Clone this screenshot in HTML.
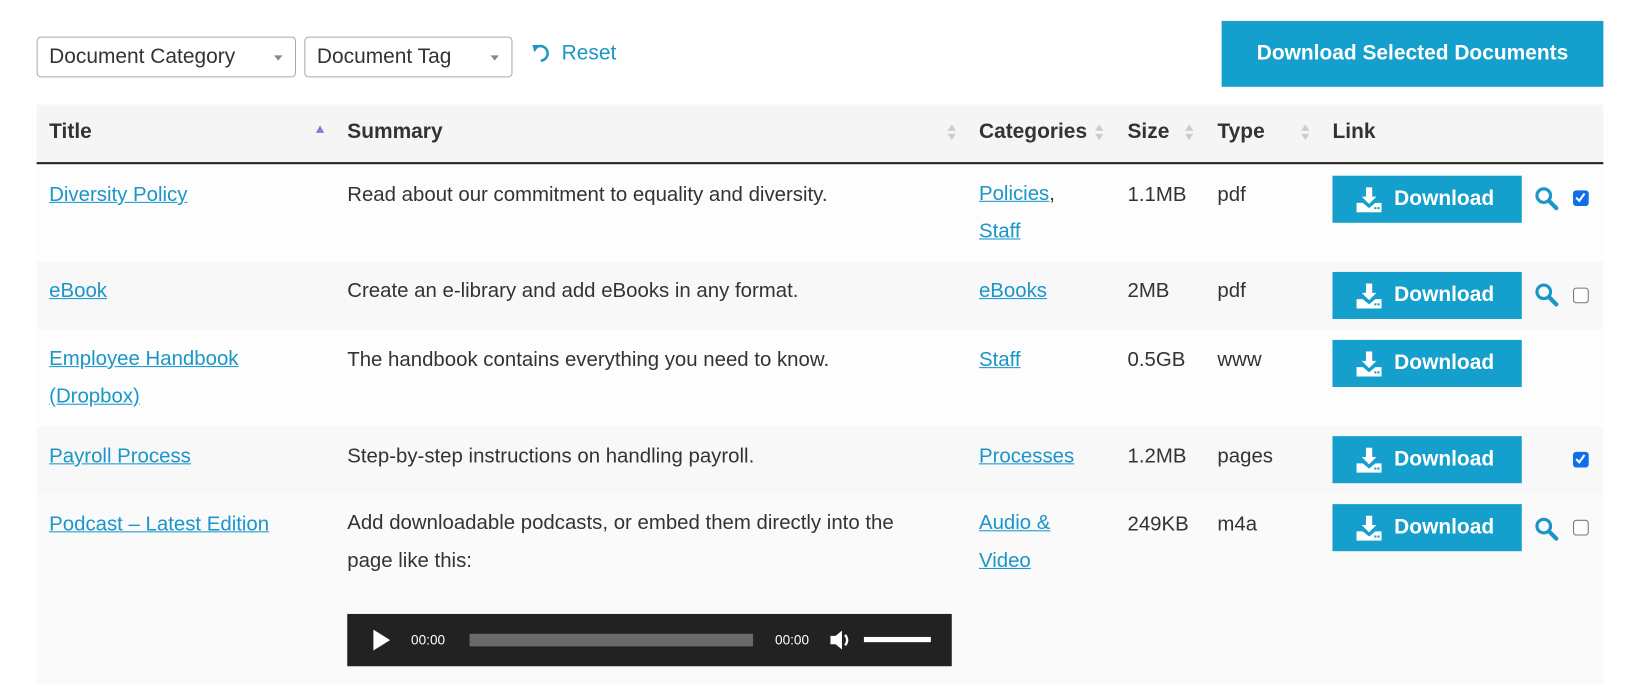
<!DOCTYPE html>
<html><head><meta charset="utf-8">
<style>
*{box-sizing:border-box;margin:0;padding:0}
html,body{width:1640px;height:684px;overflow:hidden;background:#fff}
#w{position:absolute;left:0;top:0;width:1568px;height:654px;transform:scale(1.0459);transform-origin:0 0;font-family:"Liberation Sans",sans-serif;color:#333;font-size:19.5px}
.a{position:absolute;white-space:nowrap}
.sel{position:absolute;top:35px;height:39px;border:1px solid #aaa;border-radius:4px;background:#fff;padding:0 0 0 11px;line-height:37px;font-size:20px;color:#333}
.sel:after{content:"";position:absolute;right:12px;top:17px;border-left:4.5px solid transparent;border-right:4.5px solid transparent;border-top:5px solid #888}
.lnk{color:#1a96c8;text-decoration:underline}
.hd{font-weight:bold;font-size:20px;color:#333}
.row{position:absolute;left:35px;width:1498px}
.btn{position:absolute;left:1274px;width:181px;height:45px;background:#159fcc;color:#fff;font-weight:bold;font-size:20px;line-height:45px}
.btn svg{position:absolute;left:23px;top:11px}
.btn span{position:absolute;left:59px}
.srt{position:absolute;width:0;height:0;border-left:4px solid transparent;border-right:4px solid transparent}
.cb{position:absolute;left:1504px;width:15px;height:15px;border:1.5px solid #777;border-radius:3px;background:#fff}
.cb.on{background:#0f6fe8;border-color:#0f6fe8}
</style></head><body><div id="w">
<div class="sel" style="left:35px;width:248px">Document Category</div>
<div class="sel" style="left:291px;width:199px">Document Tag</div>
<svg class="a" style="left:508px;top:41px" width="22" height="20" viewBox="0 0 22 20"><path d="M5 4 A7 7 0 1 1 9 17" fill="none" stroke="#1a96c8" stroke-width="2.4"/><path d="M1 2 L8 2 L3 9 Z" fill="#1a96c8"/></svg>
<div class="a" style="left:537px;top:40px;color:#1a96c8;font-size:20px">Reset</div>
<div class="a" style="left:1168px;top:20px;width:365px;height:63px;background:#159fcc;color:#fff;font-weight:bold;font-size:20px;line-height:63px;text-align:center">Download Selected Documents</div>

<div class="a" style="left:35px;top:100px;width:1498px;height:57px;background:#f5f5f5;border-bottom:2px solid #222"></div>
<div class="a hd" style="left:47px;top:115px">Title</div>
<div class="srt" style="left:302px;top:120px;border-bottom:7px solid #7b7fd8"></div>
<div class="a hd" style="left:332px;top:115px">Summary</div>
<div class="srt" style="left:906px;top:119px;border-bottom:6px solid #ccc"></div><div class="srt" style="left:906px;top:128px;border-top:6px solid #ccc"></div>
<div class="a hd" style="left:936px;top:115px">Categories</div>
<div class="srt" style="left:1047px;top:119px;border-bottom:6px solid #ccc"></div><div class="srt" style="left:1047px;top:128px;border-top:6px solid #ccc"></div>
<div class="a hd" style="left:1078px;top:115px">Size</div>
<div class="srt" style="left:1133px;top:119px;border-bottom:6px solid #ccc"></div><div class="srt" style="left:1133px;top:128px;border-top:6px solid #ccc"></div>
<div class="a hd" style="left:1164px;top:115px">Type</div>
<div class="srt" style="left:1244px;top:119px;border-bottom:6px solid #ccc"></div><div class="srt" style="left:1244px;top:128px;border-top:6px solid #ccc"></div>
<div class="a hd" style="left:1274px;top:115px">Link</div>

<div class="row" style="top:159px;height:91px;background:#fdfdfd"></div>
<div class="row" style="top:250px;height:65px;background:#f8f8f8"></div>
<div class="row" style="top:315px;height:93px;background:#fdfdfd"></div>
<div class="row" style="top:408px;height:64px;background:#f8f8f8"></div>
<div class="row" style="top:472px;height:182px;background:#fafafa"></div>

<!-- row1 -->
<div class="a lnk" style="left:47px;top:175px">Diversity Policy</div>
<div class="a" style="left:332px;top:175px">Read about our commitment to equality and diversity.</div>
<div class="a" style="left:936px;top:175px;line-height:36px;top:167px"><span class="lnk">Policies</span>,<br><span class="lnk">Staff</span></div>
<div class="a" style="left:1078px;top:175px">1.1MB</div>
<div class="a" style="left:1164px;top:175px">pdf</div>
<!-- row2 -->
<div class="a lnk" style="left:47px;top:267px">eBook</div>
<div class="a" style="left:332px;top:267px">Create an e-library and add eBooks in any format.</div>
<div class="a lnk" style="left:936px;top:267px">eBooks</div>
<div class="a" style="left:1078px;top:267px">2MB</div>
<div class="a" style="left:1164px;top:267px">pdf</div>
<!-- row3 -->
<div class="a" style="left:47px;top:325px;line-height:36px"><span class="lnk">Employee Handbook</span><br><span class="lnk">(Dropbox)</span></div>
<div class="a" style="left:332px;top:333px">The handbook contains everything you need to know.</div>
<div class="a lnk" style="left:936px;top:333px">Staff</div>
<div class="a" style="left:1078px;top:333px">0.5GB</div>
<div class="a" style="left:1164px;top:333px">www</div>
<!-- row4 -->
<div class="a lnk" style="left:47px;top:425px">Payroll Process</div>
<div class="a" style="left:332px;top:425px">Step-by-step instructions on handling payroll.</div>
<div class="a lnk" style="left:936px;top:425px">Processes</div>
<div class="a" style="left:1078px;top:425px">1.2MB</div>
<div class="a" style="left:1164px;top:425px">pages</div>
<!-- row5 -->
<div class="a lnk" style="left:47px;top:490px">Podcast – Latest Edition</div>
<div class="a" style="left:332px;top:482px;line-height:36px">Add downloadable podcasts, or embed them directly into the<br>page like this:</div>
<div class="a" style="left:936px;top:482px;line-height:36px"><span class="lnk">Audio &amp;</span><br><span class="lnk">Video</span></div>
<div class="a" style="left:1078px;top:490px">249KB</div>
<div class="a" style="left:1164px;top:490px">m4a</div>

<div class="a" style="left:332px;top:587px;width:578px;height:50px;background:#222"></div>
<svg class="a" style="left:356px;top:601px" width="18" height="22"><path d="M1 1 L17 11 L1 21 Z" fill="#fff"/></svg>
<div class="a" style="left:393px;top:604px;color:#fff;font-size:13px">00:00</div>
<div class="a" style="left:449px;top:606px;width:271px;height:12px;background:#6a6a6a"></div>
<div class="a" style="left:741px;top:604px;color:#fff;font-size:13px">00:00</div>
<svg class="a" style="left:793px;top:601px" width="24" height="22"><path d="M1 7 H6 L12 2 V20 L6 15 H1 Z" fill="#fff"/><path d="M15 6 Q19 11 15 16" stroke="#fff" stroke-width="2.2" fill="none"/></svg>
<div class="a" style="left:826px;top:609px;width:64px;height:5px;background:#fff"></div>

<!-- buttons -->
<div class="btn" style="top:168px"><svg width="24" height="24" viewBox="0 0 24 24"><path d="M9 0h6v9h4l-7 7-7-7h4z" fill="#fff"/><path d="M0 15h6l6 5 6-5h6v9H0z" fill="#fff"/><rect x="17" y="19" width="2" height="2" fill="#159fcc"/><rect x="20" y="19" width="2" height="2" fill="#159fcc"/></svg><span>Download</span></div>
<div class="btn" style="top:260px"><svg width="24" height="24" viewBox="0 0 24 24"><path d="M9 0h6v9h4l-7 7-7-7h4z" fill="#fff"/><path d="M0 15h6l6 5 6-5h6v9H0z" fill="#fff"/><rect x="17" y="19" width="2" height="2" fill="#159fcc"/><rect x="20" y="19" width="2" height="2" fill="#159fcc"/></svg><span>Download</span></div>
<div class="btn" style="top:325px"><svg width="24" height="24" viewBox="0 0 24 24"><path d="M9 0h6v9h4l-7 7-7-7h4z" fill="#fff"/><path d="M0 15h6l6 5 6-5h6v9H0z" fill="#fff"/><rect x="17" y="19" width="2" height="2" fill="#159fcc"/><rect x="20" y="19" width="2" height="2" fill="#159fcc"/></svg><span>Download</span></div>
<div class="btn" style="top:417px"><svg width="24" height="24" viewBox="0 0 24 24"><path d="M9 0h6v9h4l-7 7-7-7h4z" fill="#fff"/><path d="M0 15h6l6 5 6-5h6v9H0z" fill="#fff"/><rect x="17" y="19" width="2" height="2" fill="#159fcc"/><rect x="20" y="19" width="2" height="2" fill="#159fcc"/></svg><span>Download</span></div>
<div class="btn" style="top:482px"><svg width="24" height="24" viewBox="0 0 24 24"><path d="M9 0h6v9h4l-7 7-7-7h4z" fill="#fff"/><path d="M0 15h6l6 5 6-5h6v9H0z" fill="#fff"/><rect x="17" y="19" width="2" height="2" fill="#159fcc"/><rect x="20" y="19" width="2" height="2" fill="#159fcc"/></svg><span>Download</span></div>

<svg class="a" style="left:1467px;top:178px" width="24" height="24"><circle cx="9" cy="9" r="6.5" stroke="#1a96c8" stroke-width="3" fill="none"/><path d="M14 14 L21 21" stroke="#1a96c8" stroke-width="4" stroke-linecap="round"/></svg>
<svg class="a" style="left:1467px;top:270px" width="24" height="24"><circle cx="9" cy="9" r="6.5" stroke="#1a96c8" stroke-width="3" fill="none"/><path d="M14 14 L21 21" stroke="#1a96c8" stroke-width="4" stroke-linecap="round"/></svg>
<svg class="a" style="left:1467px;top:494px" width="24" height="24"><circle cx="9" cy="9" r="6.5" stroke="#1a96c8" stroke-width="3" fill="none"/><path d="M14 14 L21 21" stroke="#1a96c8" stroke-width="4" stroke-linecap="round"/></svg>

<div class="cb on" style="top:182px"><svg width="12" height="12" style="position:absolute;left:0;top:0"><path d="M2 6 L5 9 L10 2" stroke="#fff" stroke-width="2" fill="none"/></svg></div>
<div class="cb" style="top:275px"></div>
<div class="cb on" style="top:432px"><svg width="12" height="12" style="position:absolute;left:0;top:0"><path d="M2 6 L5 9 L10 2" stroke="#fff" stroke-width="2" fill="none"/></svg></div>
<div class="cb" style="top:497px"></div>
</div></body></html>
